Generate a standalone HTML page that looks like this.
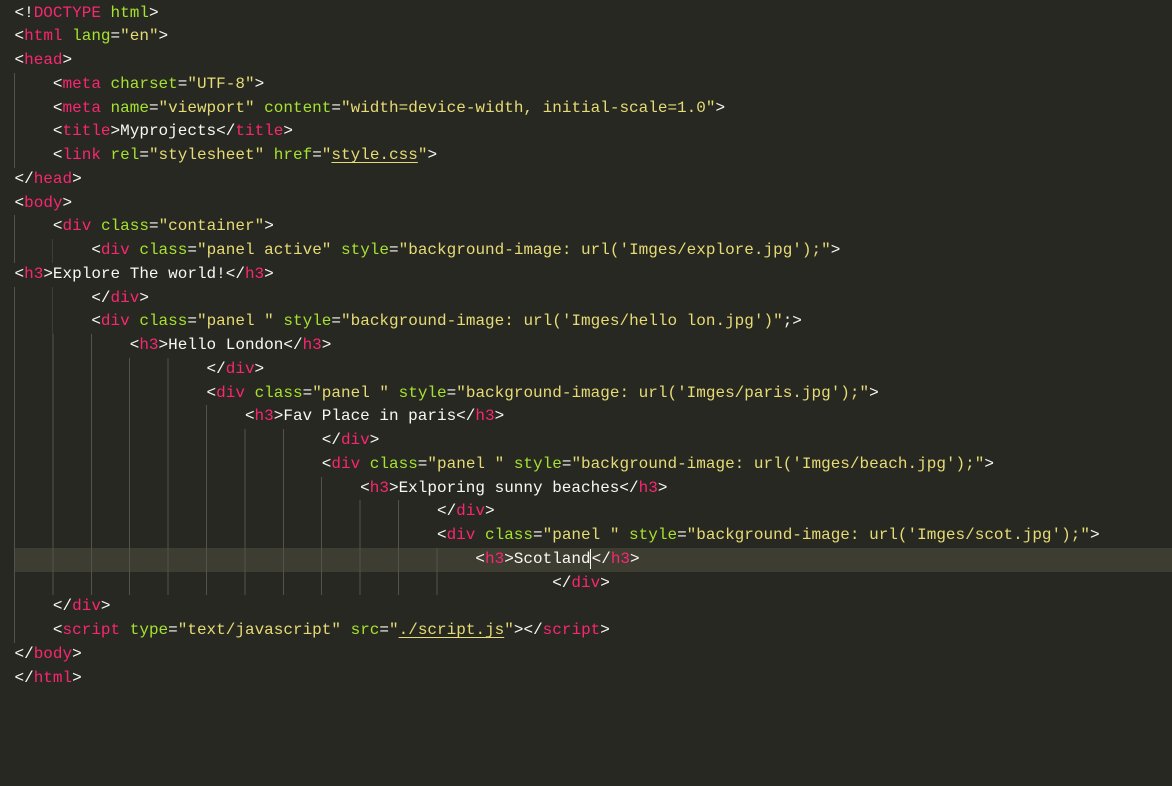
<!DOCTYPE html>
<html><head><meta charset="utf-8">
<style>
html,body{margin:0;padding:0;background:#272822;width:1172px;height:786px;overflow:hidden}
.ed{position:relative;top:1.5px;width:1172px;height:784px;font-family:"Liberation Mono",monospace;font-size:16px;color:#f8f8f2}
.l{position:absolute;left:14.5px;height:23.75px;line-height:23.75px;white-space:pre}
.g{position:absolute;left:14px;height:23.75px;background:repeating-linear-gradient(to right,#53534b 0 1px,transparent 1px 38.4px)}
.hl{position:absolute;left:14px;right:0;top:546.25px;height:23.75px;background:#3e3d32}
.t{color:#f92672}.a{color:#a6e22e}.s{color:#e6db74}
.u{text-decoration:underline;text-decoration-color:#e6db74;text-underline-offset:3px}
.cur{display:inline-block;width:0;border-left:1.5px solid #f8f8f0;height:20px;vertical-align:middle;margin-left:-1px;margin-right:1px}
</style></head><body><div class="ed">
<div class="hl"></div>
<div class="g" style="top:71.25px;width:1px"></div>
<div class="g" style="top:95px;width:1px"></div>
<div class="g" style="top:118.75px;width:1px"></div>
<div class="g" style="top:142.5px;width:1px"></div>
<div class="g" style="top:213.75px;width:1px"></div>
<div class="g" style="top:237.5px;width:39px"></div>
<div class="g" style="top:285px;width:39px"></div>
<div class="g" style="top:308.75px;width:39px"></div>
<div class="g" style="top:332.5px;width:78px"></div>
<div class="g" style="top:356.25px;width:155px"></div>
<div class="g" style="top:380px;width:155px"></div>
<div class="g" style="top:403.75px;width:193px"></div>
<div class="g" style="top:427.5px;width:270px"></div>
<div class="g" style="top:451.25px;width:270px"></div>
<div class="g" style="top:475px;width:309px"></div>
<div class="g" style="top:498.75px;width:386px"></div>
<div class="g" style="top:522.5px;width:386px"></div>
<div class="g" style="top:546.25px;width:424px"></div>
<div class="g" style="top:570px;width:424px"></div>
<div class="g" style="top:593.75px;width:1px"></div>
<div class="g" style="top:617.5px;width:1px"></div>

<div class="l" style="top:0px">&lt;!<span class="t">DOCTYPE</span> <span class="a">html</span>&gt;</div>
<div class="l" style="top:23.75px">&lt;<span class="t">html</span> <span class="a">lang</span>=<span class="s">"en"</span>&gt;</div>
<div class="l" style="top:47.5px">&lt;<span class="t">head</span>&gt;</div>
<div class="l" style="top:71.25px">    &lt;<span class="t">meta</span> <span class="a">charset</span>=<span class="s">"UTF-8"</span>&gt;</div>
<div class="l" style="top:95px">    &lt;<span class="t">meta</span> <span class="a">name</span>=<span class="s">"viewport"</span> <span class="a">content</span>=<span class="s">"width=device-width, initial-scale=1.0"</span>&gt;</div>
<div class="l" style="top:118.75px">    &lt;<span class="t">title</span>&gt;Myprojects&lt;/<span class="t">title</span>&gt;</div>
<div class="l" style="top:142.5px">    &lt;<span class="t">link</span> <span class="a">rel</span>=<span class="s">"stylesheet"</span> <span class="a">href</span>=<span class="s">"<span class="u">style.css</span>"</span>&gt;</div>
<div class="l" style="top:166.25px">&lt;/<span class="t">head</span>&gt;</div>
<div class="l" style="top:190px">&lt;<span class="t">body</span>&gt;</div>
<div class="l" style="top:213.75px">    &lt;<span class="t">div</span> <span class="a">class</span>=<span class="s">"container"</span>&gt;</div>
<div class="l" style="top:237.5px">        &lt;<span class="t">div</span> <span class="a">class</span>=<span class="s">"panel active"</span> <span class="a">style</span>=<span class="s">"background-image: url('Imges/explore.jpg');"</span>&gt;</div>
<div class="l" style="top:261.25px">&lt;<span class="t">h3</span>&gt;Explore The world!&lt;/<span class="t">h3</span>&gt;</div>
<div class="l" style="top:285px">        &lt;/<span class="t">div</span>&gt;</div>
<div class="l" style="top:308.75px">        &lt;<span class="t">div</span> <span class="a">class</span>=<span class="s">"panel "</span> <span class="a">style</span>=<span class="s">"background-image: url('Imges/hello lon.jpg')"</span>;&gt;</div>
<div class="l" style="top:332.5px">            &lt;<span class="t">h3</span>&gt;Hello London&lt;/<span class="t">h3</span>&gt;</div>
<div class="l" style="top:356.25px">                    &lt;/<span class="t">div</span>&gt;</div>
<div class="l" style="top:380px">                    &lt;<span class="t">div</span> <span class="a">class</span>=<span class="s">"panel "</span> <span class="a">style</span>=<span class="s">"background-image: url('Imges/paris.jpg');"</span>&gt;</div>
<div class="l" style="top:403.75px">                        &lt;<span class="t">h3</span>&gt;Fav Place in paris&lt;/<span class="t">h3</span>&gt;</div>
<div class="l" style="top:427.5px">                                &lt;/<span class="t">div</span>&gt;</div>
<div class="l" style="top:451.25px">                                &lt;<span class="t">div</span> <span class="a">class</span>=<span class="s">"panel "</span> <span class="a">style</span>=<span class="s">"background-image: url('Imges/beach.jpg');"</span>&gt;</div>
<div class="l" style="top:475px">                                    &lt;<span class="t">h3</span>&gt;Exlporing sunny beaches&lt;/<span class="t">h3</span>&gt;</div>
<div class="l" style="top:498.75px">                                            &lt;/<span class="t">div</span>&gt;</div>
<div class="l" style="top:522.5px">                                            &lt;<span class="t">div</span> <span class="a">class</span>=<span class="s">"panel "</span> <span class="a">style</span>=<span class="s">"background-image: url('Imges/scot.jpg');"</span>&gt;</div>
<div class="l" style="top:546.25px">                                                &lt;<span class="t">h3</span>&gt;Scotland<span class="cur"></span>&lt;/<span class="t">h3</span>&gt;</div>
<div class="l" style="top:570px">                                                        &lt;/<span class="t">div</span>&gt;</div>
<div class="l" style="top:593.75px">    &lt;/<span class="t">div</span>&gt;</div>
<div class="l" style="top:617.5px">    &lt;<span class="t">script</span> <span class="a">type</span>=<span class="s">"text/javascript"</span> <span class="a">src</span>=<span class="s">"<span class="u">./script.js</span>"</span>&gt;&lt;/<span class="t">script</span>&gt;</div>
<div class="l" style="top:641.25px">&lt;/<span class="t">body</span>&gt;</div>
<div class="l" style="top:665px">&lt;/<span class="t">html</span>&gt;</div>
</div></body></html>
